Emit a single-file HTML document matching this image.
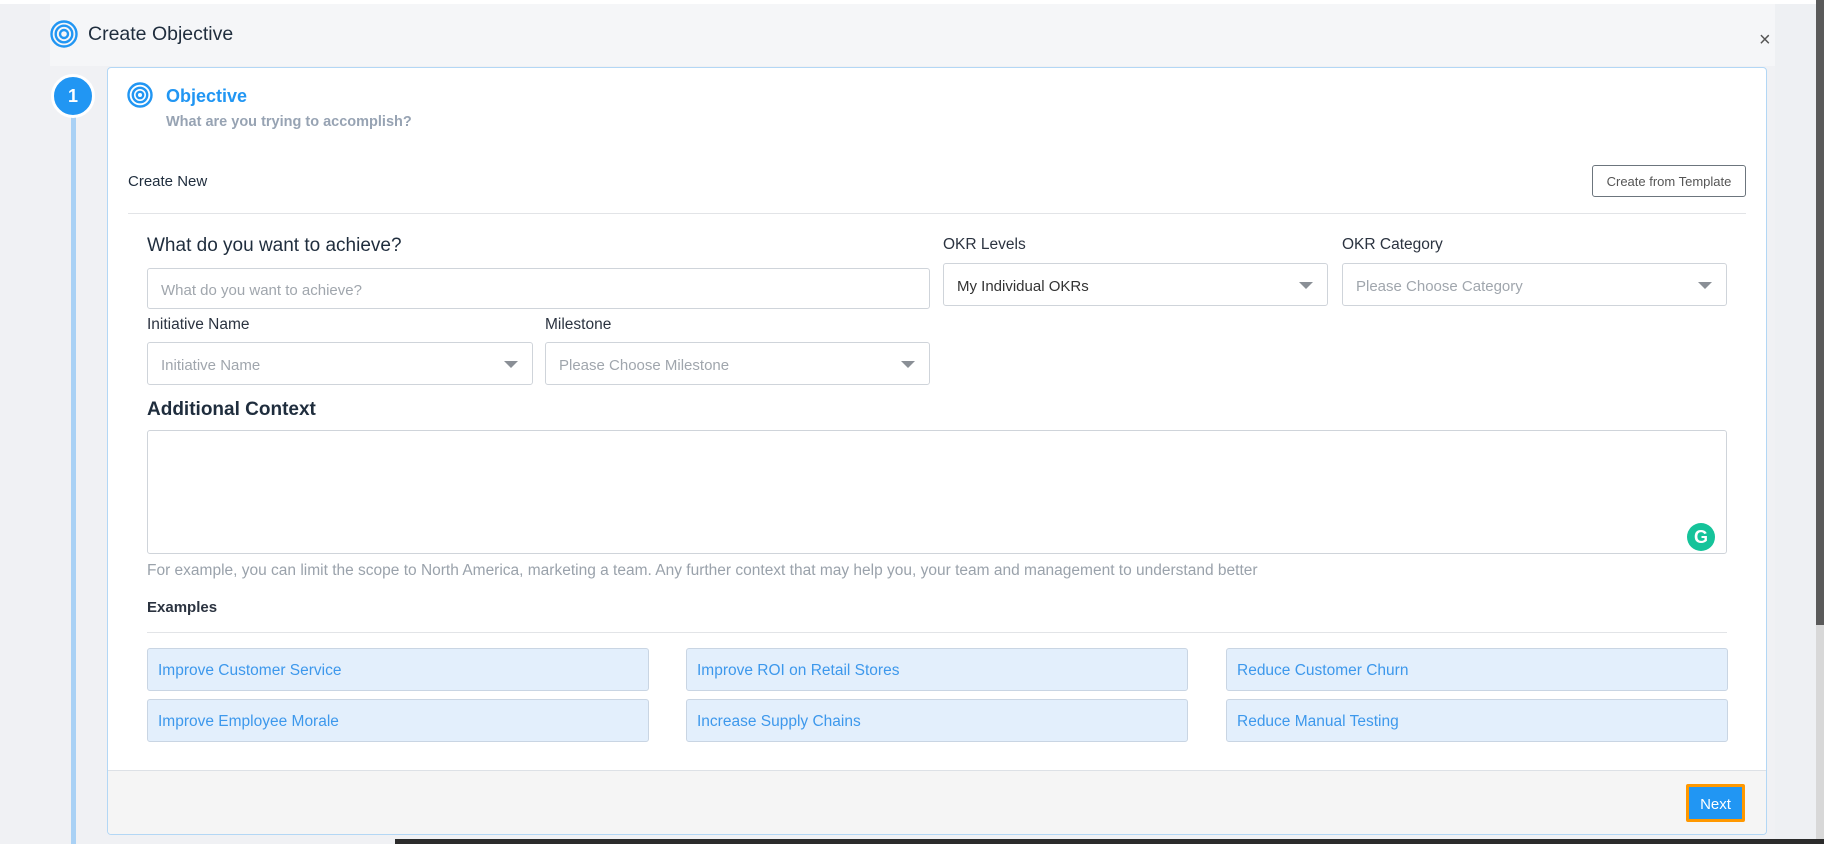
<!DOCTYPE html>
<html><head><meta charset="utf-8"><style>
*{box-sizing:border-box;margin:0;padding:0}
body{width:1824px;height:844px;overflow:hidden;background:#f0f1f4;font-family:"Liberation Sans",sans-serif;position:relative;color:#1f2d3d}
.a{position:absolute}
.sel{position:absolute;border:1px solid #cfd4da;border-radius:3px;background:#fff;font-size:15px;color:#a0a6ad;padding-left:13px;padding-top:3px;display:flex;align-items:center}
.sel .car{position:absolute;right:14px;top:50%;margin-top:-3px;width:0;height:0;border-left:7px solid transparent;border-right:7px solid transparent;border-top:7px solid #8a8f96}
.lbl{position:absolute;font-size:15.5px;color:#2b3340}
.ex{position:absolute;background:#e3effc;border:1px solid #c9d5e3;border-radius:3px;color:#3d98ec;font-size:15.5px;padding-left:10px;padding-top:3px;display:flex;align-items:center;height:43px;width:502px}
</style></head><body>
<div class="a" style="left:0;top:0;width:1824px;height:4px;background:#fff"></div>
<div class="a" style="left:50px;top:4px;width:1725px;height:62px;background:#f5f6f8"></div>
<div class="a" style="left:1775px;top:4px;width:41px;height:840px;background:#eef0f3"></div>
<div class="a" style="left:1816px;top:0;width:8px;height:625px;background:#5a5a5a"></div>
<div class="a" style="left:1816px;top:625px;width:8px;height:219px;background:#d8d8d8"></div>
<svg class="a" style="left:50px;top:20px" width="28" height="28" viewBox="0 0 28 28"><g fill="none" stroke="#2196f3" stroke-width="2.4"><circle cx="14" cy="14" r="12.5"/><circle cx="14" cy="14" r="8.3"/><circle cx="14" cy="14" r="4"/></g></svg>
<div class="a" style="left:88px;top:23px;font-size:19.5px;color:#1f2d3d">Create Objective</div>
<div class="a" style="left:1759px;top:29px;font-size:20px;color:#555">×</div>
<div class="a" style="left:71px;top:110px;width:5px;height:734px;background:#a9d1f5"></div>
<div class="a" style="left:51px;top:74px;width:44px;height:44px;border-radius:50%;background:#2196f3;border:3px solid #fff;color:#fff;font-weight:bold;font-size:18px;display:flex;align-items:center;justify-content:center">1</div>
<div class="a" style="left:107px;top:67px;width:1660px;height:768px;background:#fff;border:1px solid #b3d7f5;border-radius:4px;overflow:hidden">
 <div class="a" style="left:0;top:702px;width:1660px;height:70px;background:#f5f5f5;border-top:1px solid #dde1e6"></div>
</div>
<svg class="a" style="left:127px;top:82px" width="26" height="26" viewBox="0 0 26 26"><g fill="none" stroke="#2196f3" stroke-width="2.4"><circle cx="13" cy="13" r="11.5"/><circle cx="13" cy="13" r="7.2"/><circle cx="13" cy="13" r="3.2"/></g></svg>
<div class="a" style="left:166px;top:86px;font-size:18px;font-weight:bold;color:#2196f3">Objective</div>
<div class="a" style="left:166px;top:114px;font-size:14.5px;font-weight:bold;color:#97a3b3">What are you trying to accomplish?</div>
<div class="a" style="left:128px;top:173px;font-size:15px;color:#1f2d3d">Create New</div>
<div class="a" style="left:1592px;top:165px;width:154px;height:32px;border:1px solid #6c757d;border-radius:3px;font-size:13px;color:#555;display:flex;align-items:center;justify-content:center">Create from Template</div>
<div class="a" style="left:128px;top:213px;width:1618px;height:1px;background:#e2e4e7"></div>
<div class="a" style="left:147px;top:235px;font-size:19px;color:#1f2d3d">What do you want to achieve?</div>
<div class="sel" style="left:147px;top:268px;width:783px;height:41px">What do you want to achieve?</div>
<div class="lbl" style="left:943px;top:236px">OKR Levels</div>
<div class="sel" style="left:943px;top:263px;width:385px;height:43px;color:#333">My Individual OKRs<span class="car"></span></div>
<div class="lbl" style="left:1342px;top:236px">OKR Category</div>
<div class="sel" style="left:1342px;top:263px;width:385px;height:43px">Please Choose Category<span class="car"></span></div>
<div class="lbl" style="left:147px;top:316px">Initiative Name</div>
<div class="sel" style="left:147px;top:342px;width:386px;height:43px">Initiative Name<span class="car"></span></div>
<div class="lbl" style="left:545px;top:316px">Milestone</div>
<div class="sel" style="left:545px;top:342px;width:385px;height:43px">Please Choose Milestone<span class="car"></span></div>
<div class="a" style="left:147px;top:399px;font-size:19px;font-weight:bold;color:#1f2d3d">Additional Context</div>
<div class="a" style="left:147px;top:430px;width:1580px;height:124px;border:1px solid #cfd4da;border-radius:3px"></div>
<div class="a" style="left:1687px;top:523px;width:28px;height:28px;border-radius:50%;background:#15c39a;color:#fff;font-weight:bold;font-size:18px;display:flex;align-items:center;justify-content:center">G</div>
<div class="a" style="left:147px;top:562px;font-size:15.5px;color:#9aa2ab">For example, you can limit the scope to North America, marketing a team. Any further context that may help you, your team and management to understand better</div>
<div class="a" style="left:147px;top:599px;font-size:15px;font-weight:bold;color:#2b3340">Examples</div>
<div class="a" style="left:147px;top:632px;width:1580px;height:1px;background:#e2e4e7"></div>
<div class="ex" style="left:147px;top:648px">Improve Customer Service</div>
<div class="ex" style="left:686px;top:648px">Improve ROI on Retail Stores</div>
<div class="ex" style="left:1226px;top:648px">Reduce Customer Churn</div>
<div class="ex" style="left:147px;top:699px">Improve Employee Morale</div>
<div class="ex" style="left:686px;top:699px">Increase Supply Chains</div>
<div class="ex" style="left:1226px;top:699px">Reduce Manual Testing</div>
<div class="a" style="left:1686px;top:784px;width:59px;height:38px;background:#2196f3;border:3px solid #ff9800;border-radius:2px;color:#fff;font-size:15px;padding-top:2px;display:flex;align-items:center;justify-content:center">Next</div>
<div class="a" style="left:395px;top:839px;width:1429px;height:5px;background:#2b2b2b"></div>
</body></html>
